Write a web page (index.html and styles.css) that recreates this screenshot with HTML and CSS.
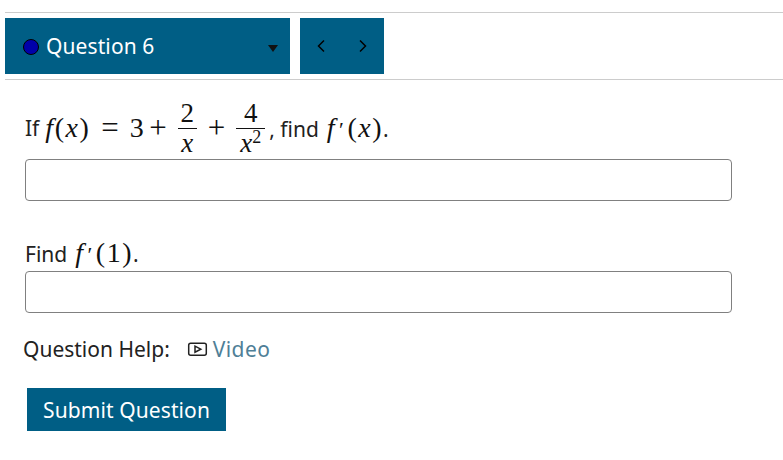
FILE: index.html
```html
<!DOCTYPE html>
<html>
<head>
	<title>Question 6</title>
	<meta charset="utf-8">
	<link rel="stylesheet" href="styles.css">
</head>
<body>
	<div class="navbar">
		<div class="select-question">
			<span class="dot"></span>
			<span class="select-label">Question 6</span>
			<span class="caret"></span>
		</div>
		<div class="arrows">
			<svg width="10" height="14" viewBox="0 0 10 14"><path d="M8 1.5 L2.5 7 L8 12.5" fill="none" stroke="#000" stroke-width="1.5"/></svg>
			<svg width="10" height="14" viewBox="0 0 10 14"><path d="M2 1.5 L7.5 7 L2 12.5" fill="none" stroke="#000" stroke-width="1.5"/></svg>
		</div>
	</div>
	<div class="question">
		<div class="prompt first">
			<span class="word-if">If</span>
			<span class="math"><i>f</i>(<i>x</i>)</span>
			<span class="math op sp">=</span>
			<span class="math sp">3</span>
			<span class="math op sp-small">+</span>
			<span class="frac sp"><span class="num">2</span><span class="den"><i>x</i></span></span>
			<span class="math op sp">+</span>
			<span class="frac wide sp"><span class="num">4</span><span class="den"><i>x</i><sup>2</sup></span></span>
			<span class="after-frac">, find<span class="math gap"><i>f</i><span class="prime">′</span>(<i>x</i>)</span>.</span>
		</div>
		<input class="answer" type="text">
		<div class="second">Find<span class="math gap"><i>f</i><span class="prime">′</span>(1)</span>.</div>
		<input class="answer" type="text">
		<div class="help">
			<span>Question Help:</span>
			<svg class="video-icon" width="21" height="16" viewBox="0 0 21 16"><rect x="1.7" y="2.2" width="17.6" height="12" rx="2" fill="none" stroke="#222" stroke-width="1.5"/><path d="M8 5.2 L13.8 8.2 L8 11.2 Z" fill="none" stroke="#222" stroke-width="1.5"/></svg>
			<a class="video-link" href="#">Video</a>
		</div>
		<button class="submit">Submit Question</button>
	</div>
</body>
</html>
```

FILE: styles.css
```css
*{
	padding: 0;
	margin: 0;
	box-sizing: border-box;
}
body{
	font-family: "Noto Sans", "Open Sans", sans-serif;
	font-size: 21px;
	color: #222;
	background-color: white;
	padding: 12px 0 0 5px;
}
.navbar{
	display: flex;
	gap: 10px;
	height: 68px;
	padding: 5px 0;
	border-top: 1px solid #ccc;
	border-bottom: 1px solid #ccc;
}
.select-question{
	width: 285px;
	background-color: #005e85;
	color: white;
	display: flex;
	align-items: center;
	padding-left: 18px;
}
.dot{
	width: 16px;
	height: 16px;
	border-radius: 50%;
	background-color: #0000aa;
	border: 1.5px solid black;
	margin-right: 7px;
	margin-top: 2px;
}
.select-label{
	flex: 1;
	line-height: 1;
	letter-spacing: .1px;
}
.caret{
	width: 0;
	height: 0;
	border-left: 5px solid transparent;
	border-right: 5px solid transparent;
	border-top: 7px solid #111;
	margin-right: 12px;
	margin-top: 4px;
}
.arrows{
	width: 84px;
	background-color: #005e85;
	display: flex;
	align-items: center;
	justify-content: space-between;
	padding: 0 16px;
}
.question{
	padding: 0 0 0 20px;
}
.prompt{
	display: flex;
	align-items: center;
}
.first{
	height: 79px;
	padding-top: 17px;
}
.word-if{
	margin-right: 6px;
}
.sp{
	margin-left: 11px;
}
.sp-small{
	margin-left: 4px;
}
.second{
	margin-top: 35px;
	height: 35px;
	line-height: 34px;
}
.math{
	font-family: "Liberation Serif", "DejaVu Serif", serif;
	font-size: 28px;
	letter-spacing: 1.5px;
	color: #111;
	white-space: pre;
}
.op{
	font-size: 31px;
	font-weight: normal;
	letter-spacing: 0;
	line-height: 34px;
}
.gap{
	margin-left: 8px;
}
.prime{
	font-size: 22px;
	margin: 0 2px 0 3px;
}
.frac{
	display: inline-flex;
	flex-direction: column;
	align-items: center;
	font-family: "Liberation Serif", serif;
	font-size: 27px;
	width: 19px;
	line-height: 29px;
	color: #111;
}
.frac.wide{
	width: 29px;
}
.num{
	width: 100%;
	text-align: center;
	border-bottom: 1px solid #111;
}
.den{
	white-space: nowrap;
}
.den sup{
	font-size: 18px;
	line-height: 0;
	vertical-align: 9px;
}
.after-frac{
	margin-left: 4px;
	white-space: pre;
}
.answer{
	display: block;
	width: 707px;
	height: 42px;
	border: 1px solid #808080;
	border-radius: 4px;
	background-color: white;
}
.help{
	display: flex;
	align-items: center;
	margin: 19px 0 0 -2px;
	height: 34px;
}
.video-icon{
	margin-left: 17px;
	margin-right: 5px;
}
.video-link{
	color: #4f7f97;
	text-decoration: none;
	letter-spacing: .4px;
}
.submit{
	display: block;
	margin: 22px 0 0 2px;
	width: 199px;
	height: 43px;
	border: none;
	background-color: #005e85;
	color: white;
	font-family: "Noto Sans", sans-serif;
	font-size: 21px;
	letter-spacing: .1px;
}
```
